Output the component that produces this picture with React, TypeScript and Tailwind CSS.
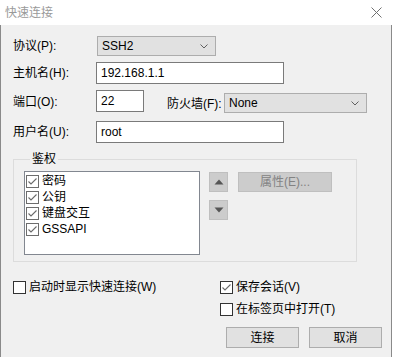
import React from "react";

const font = "font-['Liberation_Sans','Noto_Sans_CJK_SC',sans-serif]";

function Box({ checked, tone = "dark" }: { checked?: boolean; tone?: "dark" | "soft" }) {
	return (
		<span
			className={`flex h-[13px] w-[13px] shrink-0 items-center justify-center border bg-white ${
				tone === "dark" ? "border-[#333333]" : "border-[#6d6d6d]"
			}`}
		>
			{checked && (
				<svg width="11" height="11" viewBox="0 0 11 11">
					<polyline points="1.5,5.5 4,8 9.5,2.5" fill="none" stroke="#6a6a6a" strokeWidth="1.1" />
				</svg>
			)}
		</span>
	);
}

function Chevron() {
	return (
		<svg width="8" height="5" viewBox="0 0 8 5" className="shrink-0">
			<polyline points="0.5,0.5 4,4 7.5,0.5" fill="none" stroke="#606060" strokeWidth="1" />
		</svg>
	);
}

function Combo({ value, w }: { value: string; w: string }) {
	return (
		<div
			className={`flex h-[20px] items-center justify-between border border-[#adadad] bg-[#e1e1e1] pl-[4px] pr-[7px] ${w}`}
		>
			<span className="text-[12px] leading-none">{value}</span>
			<Chevron />
		</div>
	);
}

function Field({ value, w }: { value: string; w: string }) {
	return (
		<div className={`flex h-[22px] items-center border border-[#7a7a7a] bg-white pl-[4px] ${w}`}>
			<span className="text-[12px] leading-none">{value}</span>
		</div>
	);
}

function ArrowBtn({ up }: { up?: boolean }) {
	return (
		<div className="flex h-[20px] w-[19px] items-center justify-center border border-[#bfbfbf] bg-[#cccccc]">
			<svg width="10" height="6" viewBox="0 0 10 6">
				{up ? <polygon points="5,0.5 9.5,5.5 0.5,5.5" fill="#555555" /> : <polygon points="0.5,0.5 9.5,0.5 5,5.5" fill="#555555" />}
			</svg>
		</div>
	);
}

export default function App() {
	const authItems = ["密码", "公钥", "键盘交互", "GSSAPI"];

	return (
		<div className={`h-[357px] w-[393px] overflow-hidden bg-white text-[12px] text-black ${font}`}>
			{/* Title bar */}
			<div className="flex h-[25px] items-center justify-between bg-white pl-[5px] pr-[11px]">
				<span className="text-[12px] text-[#9a9a9a]">快速连接</span>
				<svg width="11" height="11" viewBox="0 0 11 11">
					<line x1="0.5" y1="0.5" x2="10.5" y2="10.5" stroke="#707070" strokeWidth="1" />
					<line x1="10.5" y1="0.5" x2="0.5" y2="10.5" stroke="#707070" strokeWidth="1" />
				</svg>
			</div>

			{/* Body */}
			<div className="h-[332px] w-[392px] border-x border-[#8a8a8a] bg-[#f0f0f0] pl-[12px] pt-[11px]">
				<div className="flex h-[20px] items-center">
					<span className="w-[83px]">协议(P):</span>
					<div className="ml-px">
						<Combo value="SSH2" w="w-[119px]" />
					</div>
				</div>

				<div className="mt-[6px] flex h-[22px] items-center">
					<span className="w-[83px]">主机名(H):</span>
					<Field value="192.168.1.1" w="w-[188px]" />
				</div>

				<div className="mt-[6px] flex h-[23px] items-start">
					<span className="flex h-[22px] w-[83px] items-center pt-[2px]">端口(O):</span>
					<Field value="22" w="w-[48px]" />
					<div className="ml-[23px] mt-[3px] flex h-[20px] items-center">
						<span className="w-[57px] pt-[1px]">防火墙(F):</span>
						<Combo value="None" w="w-[143px]" />
					</div>
				</div>

				<div className="mt-[8px] flex h-[22px] items-center">
					<span className="w-[83px]">用户名(U):</span>
					<Field value="root" w="w-[188px]" />
				</div>

				{/* Auth group */}
				<fieldset className="mt-[8px] w-[344px] border border-[#dcdcdc] pb-[6px] pl-[10px] pt-[3px]">
					<legend className="ml-[6px] px-[2px] text-[12px] leading-[17px]">鉴权</legend>
					<div className="flex items-start">
						<div className="h-[84px] w-[176px] border border-[#828790] bg-white pl-px pt-[1px]">
							{authItems.map((item) => (
								<div key={item} className="flex h-[16px] items-center gap-[3px]">
									<Box checked tone="soft" />
									<span className="leading-none">{item}</span>
								</div>
							))}
						</div>
						<div className="ml-[9px] mt-[1px] flex flex-col gap-[8px]">
							<ArrowBtn up />
							<ArrowBtn />
						</div>
						<div className="ml-[10px] mt-[1px] flex h-[20px] w-[94px] items-center justify-center border border-[#bfbfbf] bg-[#cccccc] text-[#838383]">
							属性(E)...
						</div>
					</div>
				</fieldset>

				{/* Options */}
				<div className="mt-[17px] flex">
					<div className="w-[207px]">
						<div className="flex h-[16px] items-center gap-[3px]">
							<Box />
							<span>启动时显示快速连接(W)</span>
						</div>
					</div>
					<div className="flex flex-col gap-[6px]">
						<div className="flex h-[16px] items-center gap-[3px]">
							<Box checked />
							<span>保存会话(V)</span>
						</div>
						<div className="flex h-[16px] items-center gap-[3px]">
							<Box />
							<span>在标签页中打开(T)</span>
						</div>
					</div>
				</div>

				<div className="mt-[10px] flex justify-end gap-[10px] pr-[9px]">
					<button className="flex h-[21px] w-[73px] items-center justify-center border border-[#adadad] bg-[#e1e1e1] text-[12px]">
						连接
					</button>
					<button className="flex h-[21px] w-[73px] items-center justify-center border border-[#adadad] bg-[#e1e1e1] text-[12px]">
						取消
					</button>
				</div>
			</div>
		</div>
	);
}
